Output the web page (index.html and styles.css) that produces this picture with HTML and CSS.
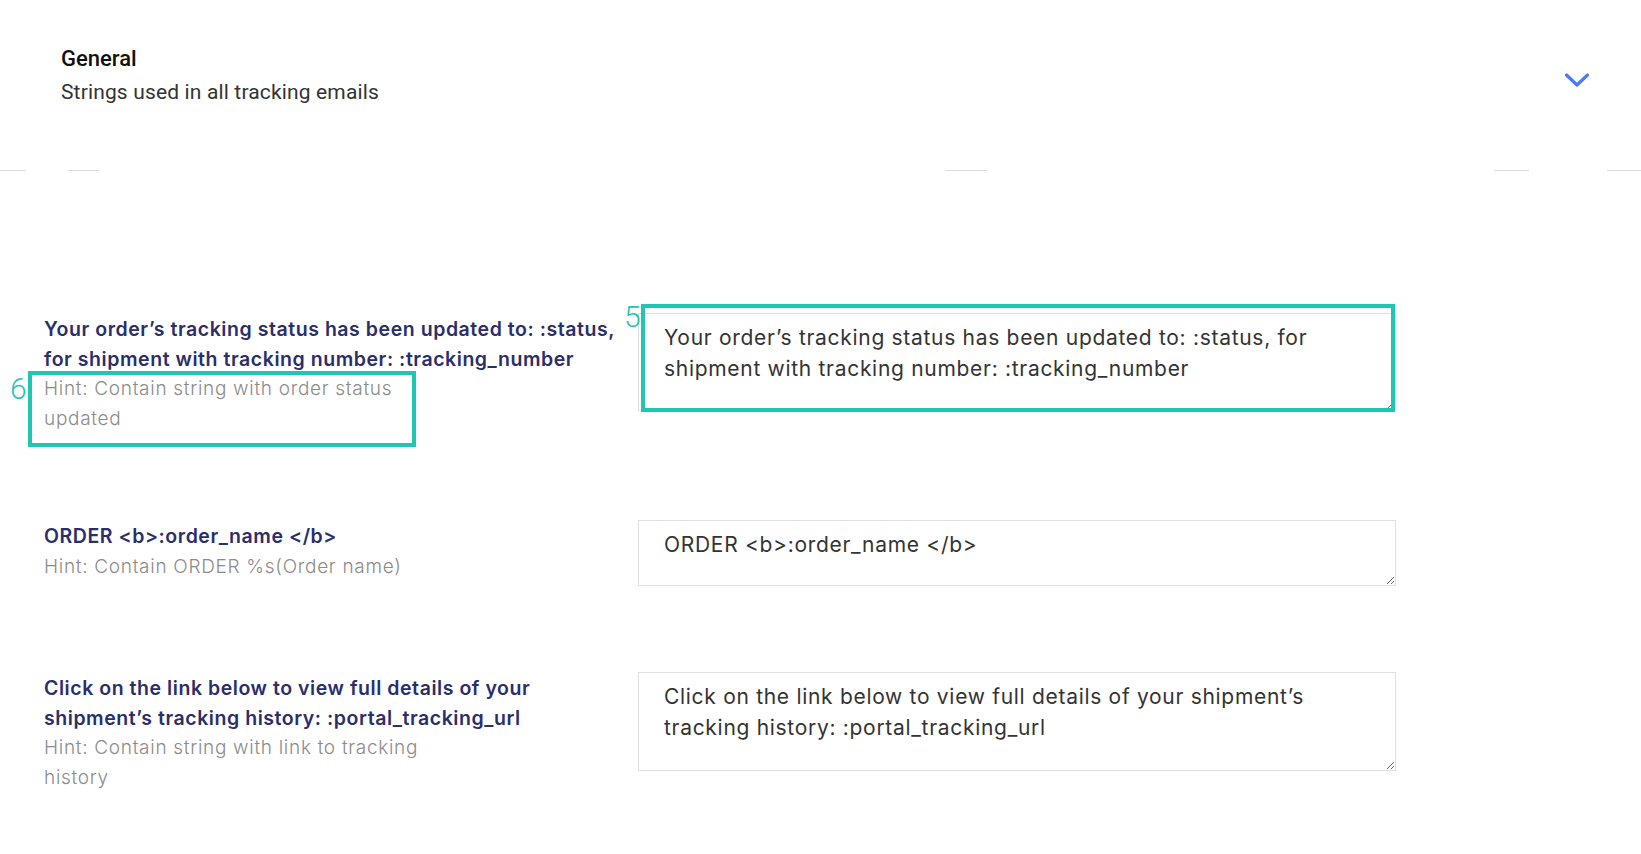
FILE: index.html
```html
<!DOCTYPE html>
<html lang="en">
<head>
    <meta charset="UTF-8">
    <meta name="viewport" content="width=device-width, initial-scale=1.0">
    <title>Tracking email strings</title>
    <link rel="stylesheet" href="styles.css">
</head>
<body>
    <div class="panel">
        <header class="panel-head">
            <div>
                <h2 class="panel-title">General</h2>
                <p class="panel-sub">Strings used in all tracking emails</p>
            </div>
            <svg class="chevron" width="26" height="16" viewBox="0 0 26 16">
                <path d="M2.5 3 L13 13 L23.5 3" fill="none" stroke="#4a7cf6" stroke-width="3.2" stroke-linecap="round" stroke-linejoin="round"/>
            </svg>
        </header>
        <div class="divider"></div>

        <div class="fields">
            <div class="field">
                <div class="field-info">
                    <div class="field-label">Your order’s tracking status has been updated to: :status, for shipment with tracking number: :tracking_number</div>
                    <div class="field-hint marked">
                        Hint: Contain string with order status updated
                        <span class="mark mark-hint"></span>
                        <span class="mark-num num-hint">6</span>
                    </div>
                </div>
                <div class="field-input marked">
                    <textarea class="first">Your order’s tracking status has been updated to: :status, for shipment with tracking number: :tracking_number</textarea>
                    <span class="mark mark-input"></span>
                    <span class="mark-num num-input">5</span>
                </div>
            </div>

            <div class="field">
                <div class="field-info">
                    <div class="field-label">ORDER &lt;b&gt;:order_name &lt;/b&gt;</div>
                    <div class="field-hint">Hint: Contain ORDER %s(Order name)</div>
                </div>
                <div class="field-input">
                    <textarea class="short">ORDER &lt;b&gt;:order_name &lt;/b&gt;</textarea>
                </div>
            </div>

            <div class="field">
                <div class="field-info">
                    <div class="field-label">Click on the link below to view full details of your shipment’s tracking history: :portal_tracking_url</div>
                    <div class="field-hint">Hint: Contain string with link to tracking history</div>
                </div>
                <div class="field-input">
                    <textarea>Click on the link below to view full details of your shipment’s tracking history: :portal_tracking_url</textarea>
                </div>
            </div>
        </div>
    </div>
</body>
</html>
```

FILE: styles.css
```css
:root {
    --navy: #2b2e69;
    --hint: #8b8b8b;
    --teal: #1fc6b3;
    --blue: #4a7cf6;
}

body {
    margin: 0;
    background: #fff;
    font-family: 'Inter', 'Noto Sans', sans-serif;
}

.panel-head {
    height: 170px;
    box-sizing: border-box;
    padding: 46px 51px 0 61px;
    display: flex;
    justify-content: space-between;
    align-items: flex-start;
    font-family: 'Roboto', sans-serif;
}

.panel-title {
    margin: 0;
    font-size: 22px;
    line-height: 26px;
    font-weight: 500;
    color: #111;
}

.panel-sub {
    margin: 7px 0 0;
    font-size: 21px;
    line-height: 26px;
    letter-spacing: 0.15px;
    color: #333;
}

.chevron {
    margin-top: 26px;
}

/* the separator only shows in pieces on the capture */
.divider {
    height: 1px;
    background: linear-gradient(to right,
        #d9d9e2 0, #d9d9e2 26px, transparent 26px,
        transparent 68px, #d9d9e2 68px, #d9d9e2 99px, transparent 99px,
        transparent 945px, #d9d9e2 945px, #d9d9e2 987px, transparent 987px,
        transparent 1494px, #d9d9e2 1494px, #d9d9e2 1529px, transparent 1529px,
        transparent 1607px, #d9d9e2 1607px);
}

.fields {
    padding: 144px 0 60px 44px;
    display: flex;
    flex-direction: column;
    gap: 88px;
}

.field {
    display: grid;
    grid-template-columns: 594px 758px;
    align-items: start;
}

.field-label {
    max-width: 586px;
    font-size: 19.5px;
    line-height: 29.5px;
    font-weight: 600;
    letter-spacing: 0.55px;
    color: var(--navy);
}

.field-hint {
    max-width: 405px;
    font-size: 19px;
    line-height: 30px;
    font-weight: 300;
    letter-spacing: 0.7px;
    color: var(--hint);
}

.field-input {
    margin-top: -2px;
}

.field-input textarea {
    display: block;
    width: 758px;
    height: 99px;
    box-sizing: border-box;
    padding: 8px 25px;
    border: 1px solid #e0e0e0;
    border-radius: 0;
    font-family: 'Inter', 'Noto Sans', sans-serif;
    font-size: 21px;
    line-height: 31px;
    letter-spacing: 0.7px;
    color: #333;
    resize: vertical;
    outline: none;
}

.field-input textarea.first {
    height: 98px;
}

.field-input textarea.short {
    height: 66px;
}

/* annotation boxes drawn over the capture */
.marked {
    position: relative;
}

.mark {
    position: absolute;
    border: 4px solid var(--teal);
    pointer-events: none;
}

.mark-input {
    top: -9px;
    left: 3px;
    right: 1px;
    bottom: -1px;
}

.mark-hint {
    top: -3px;
    left: -16px;
    width: 388px;
    height: 76px;
    box-sizing: border-box;
}

.mark-num {
    position: absolute;
    font-family: 'Roboto', sans-serif;
    font-weight: 300;
    font-size: 30px;
    line-height: 30px;
    color: var(--teal);
}

.num-input {
    top: -11px;
    left: -14px;
}

.num-hint {
    top: 0;
    left: -34px;
}
```
